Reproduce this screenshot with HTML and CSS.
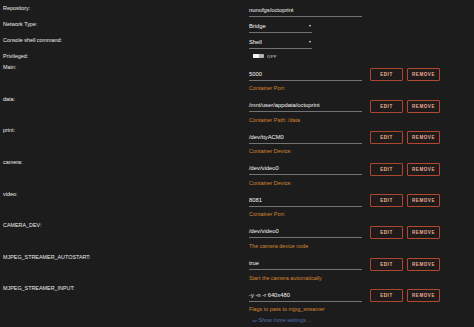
FILE: index.html
```html
<!DOCTYPE html>
<html lang="en">
<head>
    <meta charset="UTF-8">
    <meta name="viewport" content="width=device-width, initial-scale=1.0">
    <title>Container settings</title>
    <link rel="stylesheet" href="styles.css">
</head>
<body>
    <div class="settings">
        <div class="field">
            <div class="label">Repository:</div>
            <div class="value"><div class="text-input">nunofgs/octoprint</div></div>
        </div>
        <div class="field">
            <div class="label">Network Type:</div>
            <div class="value"><div class="text-input select">Bridge</div></div>
        </div>
        <div class="field">
            <div class="label">Console shell command:</div>
            <div class="value"><div class="text-input select">Shell</div></div>
        </div>
        <div class="field">
            <div class="label">Privileged:</div>
            <div class="value toggle-value">
                <span class="switch"><span class="knob"></span></span>
                <span class="switch-text">OFF</span>
            </div>
        </div>

        <!-- Puertos, rutas, dispositivos y variables -->
        <div class="mount">
            <div class="label">Main:</div>
            <div class="value">
                <div class="mount-line">
                    <div class="text-input">5000</div>
                    <button class="btn">EDIT</button>
                    <button class="btn remove">REMOVE</button>
                </div>
                <div class="hint">Container Port:</div>
            </div>
        </div>
        <div class="mount">
            <div class="label">data:</div>
            <div class="value">
                <div class="mount-line">
                    <div class="text-input">/mnt/user/appdata/octoprint</div>
                    <button class="btn">EDIT</button>
                    <button class="btn remove">REMOVE</button>
                </div>
                <div class="hint">Container Path: /data</div>
            </div>
        </div>
        <div class="mount">
            <div class="label">print:</div>
            <div class="value">
                <div class="mount-line">
                    <div class="text-input">/dev/ttyACM0</div>
                    <button class="btn">EDIT</button>
                    <button class="btn remove">REMOVE</button>
                </div>
                <div class="hint">Container Device:</div>
            </div>
        </div>
        <div class="mount">
            <div class="label">camera:</div>
            <div class="value">
                <div class="mount-line">
                    <div class="text-input">/dev/video0</div>
                    <button class="btn">EDIT</button>
                    <button class="btn remove">REMOVE</button>
                </div>
                <div class="hint">Container Device:</div>
            </div>
        </div>
        <div class="mount">
            <div class="label">video:</div>
            <div class="value">
                <div class="mount-line">
                    <div class="text-input">8081</div>
                    <button class="btn">EDIT</button>
                    <button class="btn remove">REMOVE</button>
                </div>
                <div class="hint">Container Port:</div>
            </div>
        </div>
        <div class="mount">
            <div class="label">CAMERA_DEV:</div>
            <div class="value">
                <div class="mount-line">
                    <div class="text-input">/dev/video0</div>
                    <button class="btn">EDIT</button>
                    <button class="btn remove">REMOVE</button>
                </div>
                <div class="hint">The camera device node</div>
            </div>
        </div>
        <div class="mount">
            <div class="label">MJPEG_STREAMER_AUTOSTART:</div>
            <div class="value">
                <div class="mount-line">
                    <div class="text-input">true</div>
                    <button class="btn">EDIT</button>
                    <button class="btn remove">REMOVE</button>
                </div>
                <div class="hint">Start the camera automatically</div>
            </div>
        </div>
        <div class="mount">
            <div class="label">MJPEG_STREAMER_INPUT:</div>
            <div class="value">
                <div class="mount-line">
                    <div class="text-input">-y -n -r 640x480</div>
                    <button class="btn">EDIT</button>
                    <button class="btn remove">REMOVE</button>
                </div>
                <div class="hint">Flags to pass to mjpg_streamer</div>
            </div>
        </div>
    </div>

    <div class="more">
        <svg class="chevron" width="5" height="4" viewBox="0 0 5 4"><path d="M0.5 1 L2.5 3 L4.5 1" fill="none" stroke="#4d6cae" stroke-width="1"/></svg>
        <span>Show more settings ...</span>
    </div>
</body>
</html>
```

FILE: styles.css
```css
/* Estilos generales */
body {
    margin: 0;
    padding: 0;
    background-color: #1d1c1d;
    font-family: "Liberation Sans", Arial, sans-serif;
    color: #ececec;
    overflow: hidden;
}

.field {
    display: flex;
    height: 16px;
}

.mount {
    display: flex;
    height: 31.6px;
}

.label {
    width: 249px;
    flex-shrink: 0;
    box-sizing: border-box;
    padding-left: 3px;
    font-size: 5.4px;
    line-height: 7px;
}

.field .label {
    padding-top: 4.8px;
}

.mount .label {
    padding-top: 0.2px;
}

.value {
    display: flex;
    flex-direction: column;
}

/* Campo de texto con subrayado */
.text-input {
    position: relative;
    width: 113px;
    box-sizing: border-box;
    padding-top: 6.5px;
    padding-bottom: 2px;
    font-size: 5.8px;
    line-height: 7px;
    color: #f6f6f6;
    border-bottom: 1px solid #737373;
}

.select {
    width: 63px;
}

/* Flecha del select */
.select::after {
    content: "";
    position: absolute;
    right: 1.5px;
    top: 9px;
    border-left: 1.3px solid transparent;
    border-right: 1.3px solid transparent;
    border-top: 2px solid #eee;
}

/* Interruptor */
.toggle-value {
    flex-direction: row;
    align-items: center;
    height: 16px;
    padding-left: 4px;
    padding-top: 0.5px;
    box-sizing: border-box;
}

.switch {
    position: relative;
    width: 11px;
    height: 4px;
    border-radius: 1px;
    background-color: #b3b3b3;
}

.knob {
    position: absolute;
    left: 0;
    top: 0;
    width: 6px;
    height: 4px;
    border-radius: 1px;
    background-color: #f6f6f6;
}

.switch-text {
    margin-left: 3px;
    font-size: 4.2px;
    font-weight: bold;
    letter-spacing: 0.5px;
    color: #a8a8a8;
}

.mount-line {
    display: flex;
    align-items: flex-start;
}

.btn {
    margin-top: 4px;
    width: 33px;
    height: 13px;
    padding: 0;
    border: 1px solid #a8472e;
    border-radius: 1px;
    background-color: #1f1b1b;
    color: #f0bb92;
    font-family: "Liberation Sans", Arial, sans-serif;
    font-size: 4.5px;
    font-weight: bold;
    letter-spacing: 0.6px;
}

.mount-line .text-input + .btn {
    margin-left: 8px;
}

.btn.remove {
    margin-left: 4px;
    color: #eeaa95;
    border-color: #b4472f;
}

.hint {
    margin-top: 4px;
    font-size: 5.4px;
    line-height: 7px;
    color: #d3862f;
}

/* Enlace para mostrar más ajustes */
.more {
    display: flex;
    align-items: center;
    padding-left: 252px;
    padding-top: 0.5px;
    font-size: 5.4px;
    line-height: 7px;
    color: #4d6cae;
}

.chevron {
    margin-right: 1.5px;
}
```
